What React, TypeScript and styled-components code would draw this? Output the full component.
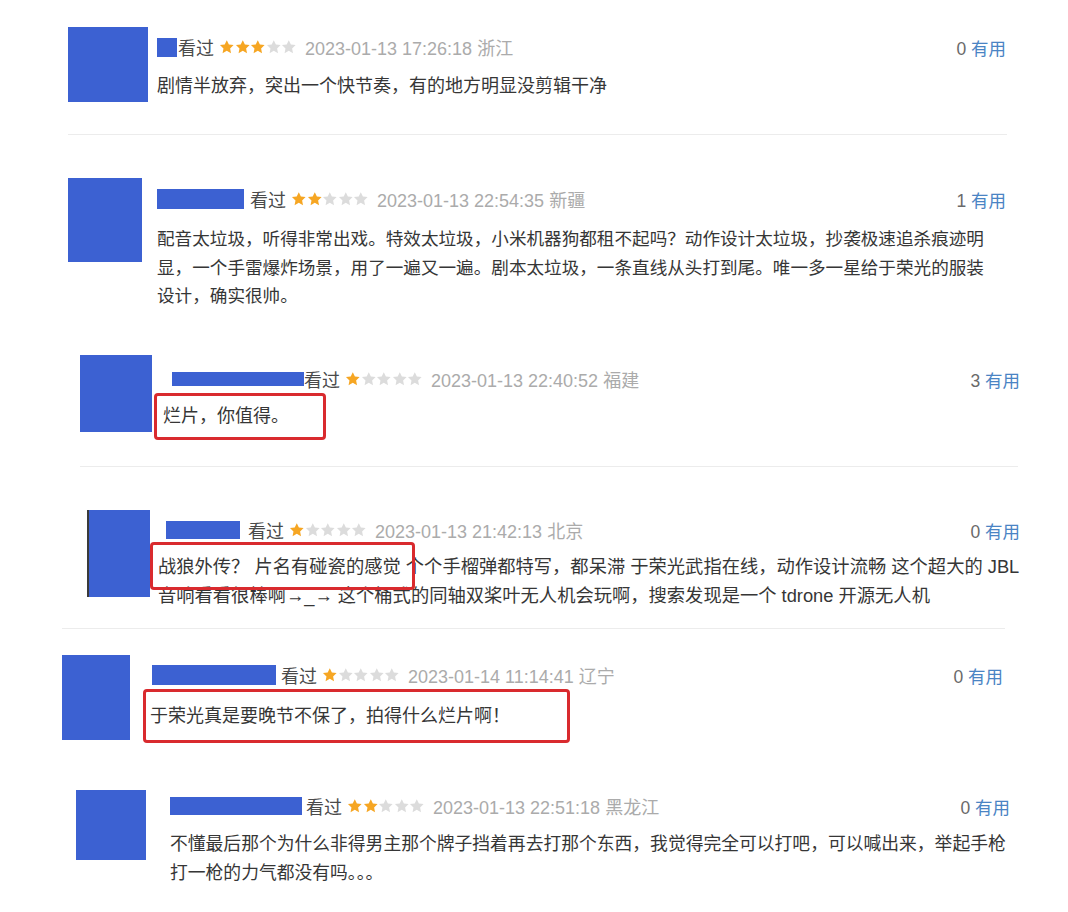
import React from 'react';
import styled, { createGlobalStyle } from 'styled-components';

interface IHighlight {
	left: number;
	top: number;
	width: number;
	height: number;
}

interface IReview {
	id: number;
	rating: number;
	time: string;
	city: string;
	useful: number;
	lines: string[];
	textSize: number;
	height: number;
	padTop: number;
	left: number;
	right: number;
	avatar: { w: number; h: number; edge?: boolean };
	bodyGap: number;
	headIndent: number;
	headTop: number;
	name: { w: number; h: number; gap: number };
	textTop: number;
	highlight?: IHighlight;
	divider?: { left: number; right: number };
}

const reviews: IReview[] = [
	{
		id: 1,
		rating: 3,
		time: '2023-01-13 17:26:18',
		city: '浙江',
		useful: 0,
		lines: ['剧情半放弃，突出一个快节奏，有的地方明显没剪辑干净'],
		textSize: 18,
		height: 135,
		padTop: 27,
		left: 68,
		right: 62,
		avatar: { w: 80, h: 75 },
		bodyGap: 9,
		headIndent: 0,
		headTop: 10,
		name: { w: 20, h: 19, gap: 1 },
		textTop: 15,
		divider: { left: 68, right: 61 },
	},
	{
		id: 2,
		rating: 2,
		time: '2023-01-13 22:54:35',
		city: '新疆',
		useful: 1,
		lines: [
			'配音太垃圾，听得非常出戏。特效太垃圾，小米机器狗都租不起吗？动作设计太垃圾，抄袭极速追杀痕迹明',
			'显，一个手雷爆炸场景，用了一遍又一遍。剧本太垃圾，一条直线从头打到尾。唯一多一星给于荣光的服装',
			'设计，确实很帅。',
		],
		textSize: 17.6,
		height: 210,
		padTop: 43,
		left: 68,
		right: 62,
		avatar: { w: 74, h: 84 },
		bodyGap: 15,
		headIndent: 0,
		headTop: 11,
		name: { w: 87, h: 20, gap: 6 },
		textTop: 16,
	},
	{
		id: 3,
		rating: 1,
		time: '2023-01-13 22:40:52',
		city: '福建',
		useful: 3,
		lines: ['烂片，你值得。'],
		textSize: 18,
		height: 122,
		padTop: 10,
		left: 80,
		right: 48,
		avatar: { w: 72, h: 77 },
		bodyGap: 11,
		headIndent: 9,
		headTop: 14,
		name: { w: 132, h: 14, gap: 0 },
		textTop: 13,
		highlight: { left: -9, top: -9, width: 172, height: 47 },
		divider: { left: 80, right: 50 },
	},
	{
		id: 4,
		rating: 1,
		time: '2023-01-13 21:42:13',
		city: '北京',
		useful: 0,
		lines: [
			'战狼外传？ 片名有碰瓷的感觉 个个手榴弹都特写，都呆滞 于荣光武指在线，动作设计流畅 这个超大的 JBL',
			'音响看看很棒啊→_→ 这个桶式的同轴双桨叶无人机会玩啊，搜索发现是一个 tdrone 开源无人机',
		],
		textSize: 18.3,
		height: 162,
		padTop: 43,
		left: 87,
		right: 48,
		avatar: { w: 63, h: 87, edge: true },
		bodyGap: 8,
		headIndent: 8,
		headTop: 10,
		name: { w: 74, h: 18, gap: 8 },
		textTop: 13,
		highlight: { left: -8, top: -11, width: 265, height: 48 },
		divider: { left: 62, right: 63 },
	},
	{
		id: 5,
		rating: 1,
		time: '2023-01-14 11:14:41',
		city: '辽宁',
		useful: 0,
		lines: ['于荣光真是要晚节不保了，拍得什么烂片啊！'],
		textSize: 18,
		height: 146,
		padTop: 26,
		left: 62,
		right: 65,
		avatar: { w: 68, h: 85 },
		bodyGap: 20,
		headIndent: 2,
		headTop: 10,
		name: { w: 124, h: 20, gap: 5 },
		textTop: 17,
		highlight: { left: -7, top: -13, width: 427, height: 54 },
	},
	{
		id: 6,
		rating: 2,
		time: '2023-01-13 22:51:18',
		city: '黑龙江',
		useful: 0,
		lines: [
			'不懂最后那个为什么非得男主那个牌子挡着再去打那个东西，我觉得完全可以打吧，可以喊出来，举起手枪',
			'打一枪的力气都没有吗。。。',
		],
		textSize: 17.8,
		height: 137,
		padTop: 15,
		left: 76,
		right: 58,
		avatar: { w: 70, h: 70 },
		bodyGap: 24,
		headIndent: 0,
		headTop: 6,
		name: { w: 132, h: 18, gap: 4 },
		textTop: 14,
	},
];

const Star: React.FC<{ on: boolean }> = ({ on }) => (
	<svg width='15.6' height='16' viewBox='0 0 24 24'>
		<path
			d='M12 1.5l3.2 6.7 7.3.9-5.4 5.1 1.4 7.3L12 17.9l-6.5 3.6 1.4-7.3-5.4-5.1 7.3-.9z'
			fill={on ? '#f6a623' : '#dcdcdc'}
		/>
	</svg>
);

const Stars: React.FC<{ rating: number }> = ({ rating }) => (
	<StarRow>
		{[1, 2, 3, 4, 5].map((n) => (
			<Star key={n} on={n <= rating} />
		))}
	</StarRow>
);

const Review: React.FC<{ item: IReview }> = ({ item }) => (
	<Card $height={item.height} $padTop={item.padTop}>
		<Row $left={item.left} $right={item.right}>
			<Avatar $w={item.avatar.w} $h={item.avatar.h} $edge={!!item.avatar.edge} />
			<Body $gap={item.bodyGap}>
				<Header $indent={item.headIndent} $top={item.headTop}>
					<NameBar $w={item.name.w} $h={item.name.h} $gap={item.name.gap} />
					<Watched>看过</Watched>
					<Stars rating={item.rating} />
					<Time>
						{item.time} {item.city}
					</Time>
					<Useful>
						<Count>{item.useful}</Count> 有用
					</Useful>
				</Header>
				<Comment $top={item.textTop} $size={item.textSize}>
					{item.lines.map((line, i) => (
						<Line key={i}>{line}</Line>
					))}
					{item.highlight && (
						<Mark
							style={{
								left: item.highlight.left,
								top: item.highlight.top,
								width: item.highlight.width,
								height: item.highlight.height,
							}}
						/>
					)}
				</Comment>
			</Body>
		</Row>
		{item.divider && <Divider $left={item.divider.left} $right={item.divider.right} />}
	</Card>
);

const App: React.FC = () => (
	<>
		<GlobalStyle />
		<Page>
			{reviews.map((item) => (
				<Review key={item.id} item={item} />
			))}
		</Page>
	</>
);

const GlobalStyle = createGlobalStyle`
	* { box-sizing: border-box; }
	body {
		margin: 0;
		background: #fff;
		font-family: "Liberation Sans", "Noto Sans CJK SC", sans-serif;
	}
`;

const Page = styled.div`
	width: 1068px;
	height: 912px;
	overflow: hidden;
	background: #fff;
	display: flex;
	flex-direction: column;
`;

const Card = styled.div<{ $height: number; $padTop: number }>`
	height: ${({ $height }) => $height}px;
	flex-shrink: 0;
	padding-top: ${({ $padTop }) => $padTop}px;
	display: flex;
	flex-direction: column;
`;

const Row = styled.div<{ $left: number; $right: number }>`
	display: flex;
	align-items: flex-start;
	padding-left: ${({ $left }) => $left}px;
	padding-right: ${({ $right }) => $right}px;
`;

const Avatar = styled.div<{ $w: number; $h: number; $edge: boolean }>`
	width: ${({ $w }) => $w}px;
	height: ${({ $h }) => $h}px;
	flex-shrink: 0;
	background: #3c61d2;
	border-left: ${({ $edge }) => ($edge ? '2px solid #3a3a3a' : 'none')};
`;

const Body = styled.div<{ $gap: number }>`
	flex: 1;
	margin-left: ${({ $gap }) => $gap}px;
	min-width: 0;
`;

const Header = styled.div<{ $indent: number; $top: number }>`
	display: flex;
	align-items: center;
	height: 20px;
	margin-left: ${({ $indent }) => $indent}px;
	margin-top: ${({ $top }) => $top}px;
	font-size: 18px;
	white-space: nowrap;
`;

const NameBar = styled.span<{ $w: number; $h: number; $gap: number }>`
	width: ${({ $w }) => $w}px;
	height: ${({ $h }) => $h}px;
	margin-right: ${({ $gap }) => $gap}px;
	background: #3c61d2;
	flex-shrink: 0;
`;

const Watched = styled.span`
	color: #4a4a4a;
	font-size: 18px;
	margin-right: 5px;
`;

const StarRow = styled.span`
	display: flex;
	margin-right: 8px;
`;

const Time = styled.span`
	color: #ababab;
`;

const Useful = styled.span`
	margin-left: auto;
	color: #4a84c4;
	font-size: 17.5px;
`;

const Count = styled.span`
	color: #6a6a6a;
`;

const Comment = styled.div<{ $top: number; $size: number }>`
	position: relative;
	margin-top: ${({ $top }) => $top}px;
	color: #363636;
	font-size: ${({ $size }) => $size}px;
	line-height: 28.5px;
`;

const Line = styled.div`
	white-space: nowrap;
`;

const Mark = styled.div`
	position: absolute;
	border: 3px solid #d92a2e;
	border-radius: 4px;
	pointer-events: none;
`;

const Divider = styled.div<{ $left: number; $right: number }>`
	margin-top: auto;
	height: 1px;
	flex-shrink: 0;
	background: #ececec;
	margin-left: ${({ $left }) => $left}px;
	margin-right: ${({ $right }) => $right}px;
`;

export default App;
